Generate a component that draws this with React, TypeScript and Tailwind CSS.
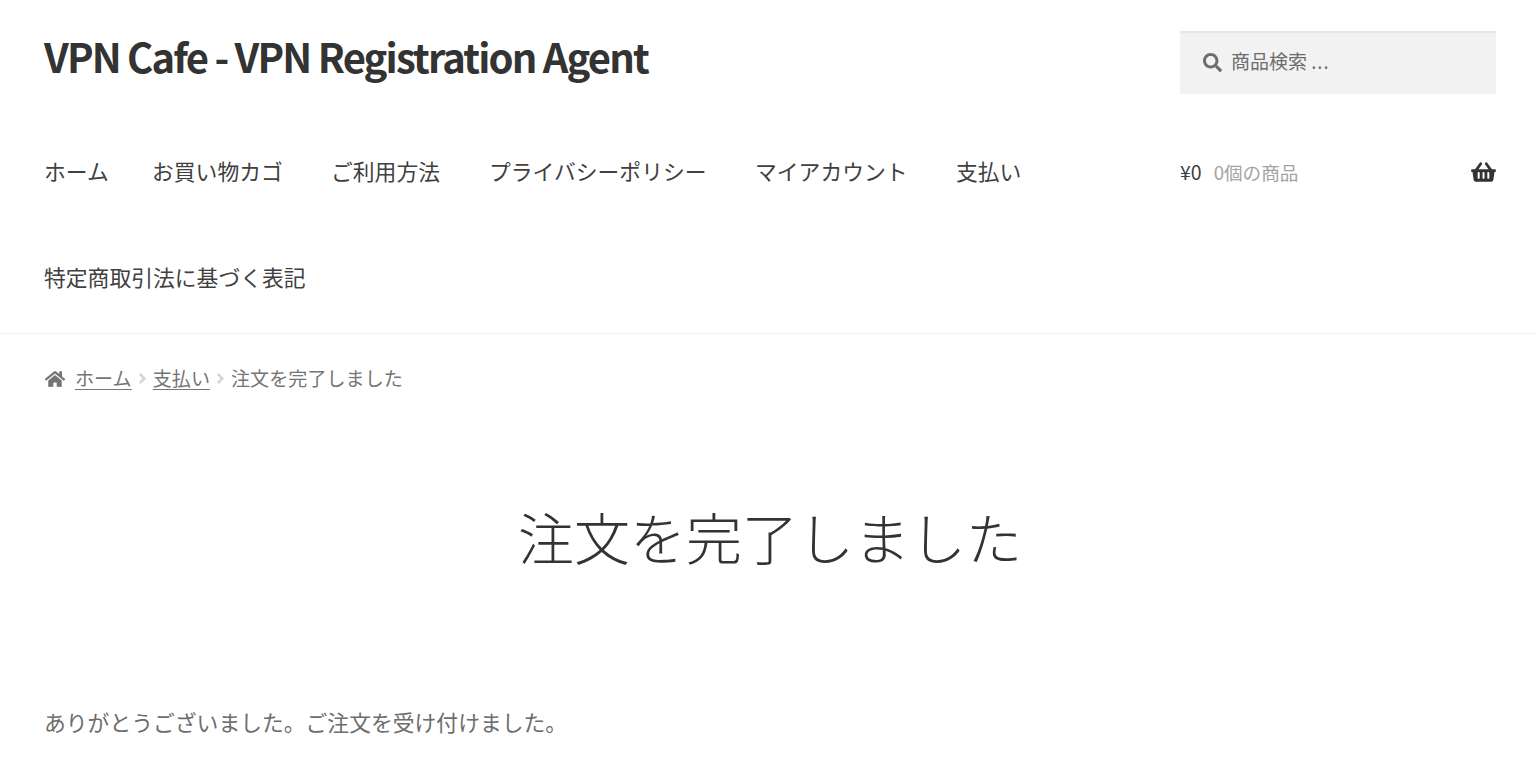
import { FaAngleRight, FaHome, FaSearch, FaShoppingBasket } from "react-icons/fa";

const jp = "font-['Noto_Sans_CJK_JP',sans-serif]";
const nav1 = [
  { t: "ホーム", w: "w-[108px]" },
  { t: "お買い物カゴ", w: "w-[179px]" },
  { t: "ご利用方法", w: "w-[158px]" },
  { t: "プライバシーポリシー", w: "w-[266px]" },
  { t: "マイアカウント", w: "w-[201px]" },
  { t: "支払い", w: "w-[70px]" },
];

export default function App() {
  return (
    <div className={`${jp} h-[766px] overflow-hidden bg-white text-[#43454b]`}>
      <header className="h-[334px] border-b border-[#f0f0f0] pr-[40px] pl-[44px]">
        <div className="flex h-[118px] items-start justify-between pt-[31px]">
          <h1 className="-mt-[2px] text-[40px] leading-[54px] font-bold tracking-[-1.85px] text-[#333333]">
            VPN Cafe - VPN Registration Agent
          </h1>
          <div className="flex h-[63px] w-[316px] items-center gap-[9px] border-t-2 border-[#e6e6e6] bg-[#f2f2f2] pb-[4px] pl-[23px] text-[19px] text-[#6d6d6d]">
            <FaSearch className="mt-[2px] h-[19px] w-[19px] text-[#6d6d6d]" />
            <span>
              商品検索 <span className="font-['Noto_Sans',sans-serif] tracking-[1px]">...</span>
            </span>
          </div>
        </div>
        <div className="flex justify-between">
          <nav className="w-[1100px] text-[21.8px] text-[#404040]">
            <ul className="flex h-[106px] items-center pt-[1px]">
              {nav1.map((n) => (
                <li key={n.t} className={`${n.w} shrink-0`}>{n.t}</li>
              ))}
            </ul>
            <div className="flex h-[106px] items-center">特定商取引法に基づく表記</div>
          </nav>
          <div className="flex h-[106px] w-[316px] items-center justify-between pt-[2px] text-[19.5px]">
            <span className="text-[#404040]">
              ¥0<span className="ml-[12px] text-[18.6px] text-[#a3a3a3]">0個の商品</span>
            </span>
            <FaShoppingBasket className="h-[22px] w-[25px] text-[#333333]" />
          </div>
        </div>
      </header>
      <main className="pr-[40px] pl-[44px]">
        <div className="flex h-[89px] items-center text-[19.1px] text-[#757575]">
          <FaHome className="mr-[9px] h-[18px] w-[22px]" />
          <span className="underline underline-offset-[3px]">ホーム</span>
          <FaAngleRight className="mx-[4px] h-[17px] w-[13px] text-[#d6d6d6]" />
          <span className="underline underline-offset-[3px]">支払い</span>
          <FaAngleRight className="mx-[4px] h-[17px] w-[13px] text-[#d6d6d6]" />
          <span>注文を完了しました</span>
        </div>
        <h2 className="mt-[68px] text-center text-[56px] leading-[90px] font-extralight text-[#333333]">
          注文を完了しました
        </h2>
        <p className="mt-[125px] text-[21.8px] text-[#6d6d6d]">ありがとうございました。ご注文を受け付けました。</p>
      </main>
    </div>
  );
}
